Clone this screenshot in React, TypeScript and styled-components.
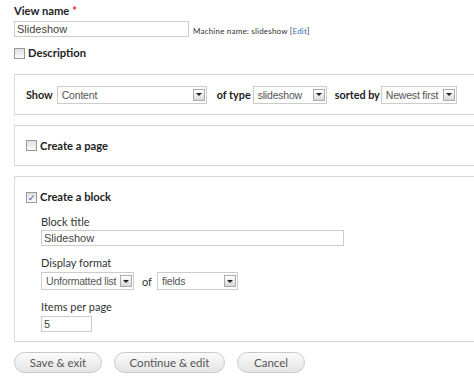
import styled, { createGlobalStyle } from "styled-components";

const GlobalStyle = createGlobalStyle`
  html, body {
    margin: 0;
    padding: 0;
    background: #fff;
    overflow: hidden;
  }
  body {
    font-family: "Lato", "DejaVu Sans", sans-serif;
    color: #333;
  }
`;

const Page = styled.div`
  width: 474px;
  height: 381px;
  padding: 4px 0 0 14px;
  box-sizing: border-box;
  overflow: hidden;
`;

const Label = styled.div`
  font-weight: bold;
  font-size: 11.2px;
  line-height: 14px;
  color: #222;
`;

const Required = styled.span`
  color: #e02020;
  margin-left: 3px;
`;

const NameRow = styled.div`
  display: flex;
  align-items: center;
  margin-top: 3px;
`;

const TextInput = styled.div<{ $w: number }>`
  width: ${(p) => p.$w}px;
  height: 16px;
  box-sizing: border-box;
  border: 1px solid #ccc;
  font-family: "Liberation Sans", Arial, sans-serif;
  font-size: 11px;
  line-height: 14px;
  padding-left: 2px;
  color: #444;
`;

const Machine = styled.div`
  font-size: 8px;
  margin-left: 4px;
  margin-top: 3px;
  color: #333;
  letter-spacing: 0.2px;
  a {
    color: #2a70b8;
    text-decoration: none;
  }
`;

const Check = styled.span<{ $on?: boolean }>`
  width: 9px;
  height: 9px;
  border: 1px solid #999;
  background: linear-gradient(#e0e0e0, #fafafa);
  display: inline-flex;
  align-items: center;
  justify-content: center;
  flex-shrink: 0;
  font-size: 9px;
  color: #3850a8;
  line-height: 1;
`;

const CheckRow = styled.div`
  display: flex;
  align-items: center;
  gap: 3px;
  font-weight: bold;
  font-size: 11.2px;
  line-height: 14px;
  color: #222;
`;

const DescRow = styled(CheckRow)`
  margin-top: 9px;
`;

const Fieldset = styled.div<{ $h: number; $mt: number }>`
  margin-top: ${(p) => p.$mt}px;
  height: ${(p) => p.$h}px;
  width: 480px;
  box-sizing: border-box;
  border: 1px solid #d8d8d8;
  padding: 0 0 0 11px;
`;

const ShowRow = styled.div`
  display: flex;
  align-items: center;
  height: 100%;
  font-weight: bold;
  font-size: 10.8px;
  color: #222;
  white-space: nowrap;
`;

const Select = styled.div<{ $w: number }>`
  width: ${(p) => p.$w}px;
  height: 18px;
  flex-shrink: 0;
  box-sizing: border-box;
  border: 1px solid #ccc;
  display: flex;
  align-items: center;
  justify-content: space-between;
  font-family: "Liberation Sans", Arial, sans-serif;
  font-weight: normal;
  font-size: 10.5px;
  letter-spacing: -0.2px;
  white-space: nowrap;
  overflow: hidden;
  color: #555;
  padding: 0 1px 0 4px;
  background: #fff;
`;

const Arrow = styled.span`
  width: 10px;
  height: 10px;
  flex-shrink: 0;
  border: 1px solid #aaa;
  background: linear-gradient(#fff, #d8d8d8);
  display: flex;
  align-items: center;
  justify-content: center;
  &::after {
    content: "";
    border-left: 3px solid transparent;
    border-right: 3px solid transparent;
    border-top: 3px solid #222;
  }
`;

const Word = styled.span<{ $ml: number; $mr: number }>`
  margin: 0 ${(p) => p.$mr}px 0 ${(p) => p.$ml}px;
`;

const PageRow = styled(CheckRow)`
  height: 100%;
`;

const BlockHead = styled(CheckRow)`
  padding-top: 13px;
`;

const BlockBody = styled.div`
  padding: 0 0 0 15px;
`;

const SubLabel = styled.div`
  font-size: 11px;
  line-height: 14px;
  color: #333;
`;

const Field = styled.div<{ $mt: number; $gap: number }>`
  margin-top: ${(p) => p.$mt}px;
  display: flex;
  flex-direction: column;
  align-items: flex-start;
  gap: ${(p) => p.$gap}px;
`;

const InlineRow = styled.div`
  display: flex;
  align-items: center;
  font-size: 11px;
  color: #333;
`;

const Buttons = styled.div`
  display: flex;
  gap: 12px;
  margin-top: 10px;
`;

const Button = styled.div<{ $w: number }>`
  width: ${(p) => p.$w}px;
  height: 21px;
  box-sizing: border-box;
  border: 1px solid #c8c8c8;
  border-radius: 11px;
  background: linear-gradient(#fbfbfb, #e4e4e4);
  display: flex;
  align-items: center;
  justify-content: center;
  font-size: 11.5px;
  color: #555;
`;

function Dropdown({ w, text }: { w: number; text: string }) {
  return (
    <Select $w={w}>
      <span>{text}</span>
      <Arrow />
    </Select>
  );
}

export default function App() {
  return (
    <Page>
      <GlobalStyle />
      <Label>
        View name<Required>*</Required>
      </Label>
      <NameRow>
        <TextInput $w={175}>Slideshow</TextInput>
        <Machine>
          Machine name: slideshow [<a>Edit</a>]
        </Machine>
      </NameRow>
      <DescRow>
        <Check />
        Description
      </DescRow>

      <Fieldset $mt={14} $h={41}>
        <ShowRow>
          <Word $ml={0} $mr={4}>Show</Word>
          <Dropdown w={150} text="Content" />
          <Word $ml={10} $mr={2}>of type</Word>
          <Dropdown w={74} text="slideshow" />
          <Word $ml={8} $mr={1}>sorted by</Word>
          <Dropdown w={76} text="Newest first" />
        </ShowRow>
      </Fieldset>

      <Fieldset $mt={10} $h={41}>
        <PageRow>
          <Check />
          Create a page
        </PageRow>
      </Fieldset>

      <Fieldset $mt={10} $h={166}>
        <BlockHead>
          <Check $on>✓</Check>
          Create a block
        </BlockHead>
        <BlockBody>
          <Field $mt={11} $gap={1}>
            <SubLabel>Block title</SubLabel>
            <TextInput $w={303}>Slideshow</TextInput>
          </Field>
          <Field $mt={10} $gap={2}>
            <SubLabel>Display format</SubLabel>
            <InlineRow>
              <Dropdown w={93} text="Unformatted list" />
              <Word $ml={8} $mr={5}>of</Word>
              <Dropdown w={81} text="fields" />
            </InlineRow>
          </Field>
          <Field $mt={10} $gap={2}>
            <SubLabel>Items per page</SubLabel>
            <TextInput $w={51}>5</TextInput>
          </Field>
        </BlockBody>
      </Fieldset>

      <Buttons>
        <Button $w={88}>Save &amp; exit</Button>
        <Button $w={111}>Continue &amp; edit</Button>
        <Button $w={68}>Cancel</Button>
      </Buttons>
    </Page>
  );
}
